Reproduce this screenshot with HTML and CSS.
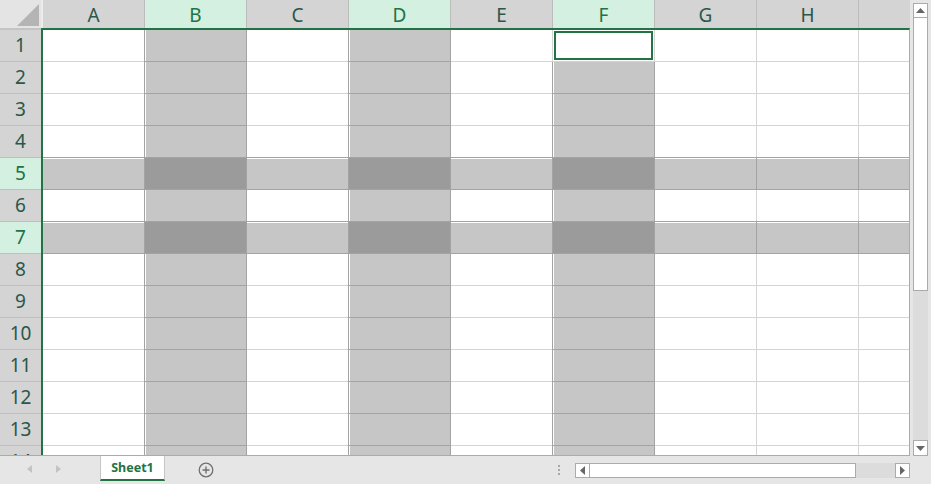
FILE: index.html
```html
<!DOCTYPE html>
<html lang="en">

<head>
    <meta charset="UTF-8">
    <title>Sheet1</title>
    <link rel="stylesheet" href="styles.css">
</head>

<body>
    <div class="app">
        <div class="main">
            <div class="sheet">
                <div class="head-row">
                    <div class="corner">
                        <svg width="24" height="24" viewBox="0 0 24 24"><polygon points="23,1 23,23 1,23" fill="#b4b4b4" /></svg>
                    </div>
                    <div class="col-head">A</div>
                    <div class="col-head on">B</div>
                    <div class="col-head">C</div>
                    <div class="col-head on">D</div>
                    <div class="col-head">E</div>
                    <div class="col-head on">F</div>
                    <div class="col-head">G</div>
                    <div class="col-head">H</div>
                    <div class="col-head"></div>
                </div>
                <div class="sheet-body">
                    <div class="row-heads">
                        <div class="row-head">1</div>
                        <div class="row-head">2</div>
                        <div class="row-head">3</div>
                        <div class="row-head">4</div>
                        <div class="row-head on">5</div>
                        <div class="row-head">6</div>
                        <div class="row-head on">7</div>
                        <div class="row-head">8</div>
                        <div class="row-head">9</div>
                        <div class="row-head">10</div>
                        <div class="row-head">11</div>
                        <div class="row-head">12</div>
                        <div class="row-head">13</div>
                        <div class="row-head">14</div>
                    </div>
                    <div class="cells" id="cells"></div>
                </div>
            </div>
            <div class="vscroll">
                <div class="sbtn">
                    <svg width="9" height="5" viewBox="0 0 9 5"><polygon points="4.5,0 9,5 0,5" fill="#666" /></svg>
                </div>
                <div class="vthumb"></div>
                <div class="vtrack"></div>
                <div class="sbtn">
                    <svg width="9" height="5" viewBox="0 0 9 5"><polygon points="0,0 9,0 4.5,5" fill="#666" /></svg>
                </div>
            </div>
        </div>

        <div class="tabbar">
            <div class="nav">
                <svg width="5" height="8" viewBox="0 0 5 8"><polygon points="5,0 5,8 0,4" fill="#c3c3c3" /></svg>
                <svg width="5" height="8" viewBox="0 0 5 8"><polygon points="0,0 5,4 0,8" fill="#c3c3c3" /></svg>
            </div>
            <div class="tab">Sheet1</div>
            <div class="add">
                <svg width="16" height="16" viewBox="0 0 16 16">
                    <circle cx="8" cy="8" r="6.8" fill="none" stroke="#707070" stroke-width="1.3" />
                    <path d="M8 4.5v7M4.5 8h7" stroke="#707070" stroke-width="1.4" />
                </svg>
            </div>
            <div class="grow"></div>
            <div class="dots"><span></span><span></span><span></span></div>
            <div class="hscroll">
                <div class="sbtn">
                    <svg width="5" height="9" viewBox="0 0 5 9"><polygon points="5,0 5,9 0,4.5" fill="#666" /></svg>
                </div>
                <div class="hthumb"></div>
                <div class="htrack"></div>
                <div class="sbtn">
                    <svg width="5" height="9" viewBox="0 0 5 9"><polygon points="0,0 5,4.5 0,9" fill="#666" /></svg>
                </div>
            </div>
        </div>
    </div>

    <script>
        const selCols = [1, 3, 5];
        const selRows = [5, 7];
        const grid = document.getElementById('cells');
        for (let r = 1; r <= 14; r++) {
            for (let c = 0; c < 9; c++) {
                const cell = document.createElement('div');
                const inCol = selCols.includes(c);
                const inRow = selRows.includes(r);
                cell.className = 'cell';
                if (r === 1 && c === 5) cell.classList.add('active');
                else if (inCol && inRow) cell.classList.add('both');
                else if (inCol) cell.classList.add('col');
                else if (inRow) cell.classList.add('row');
                grid.appendChild(cell);
            }
        }
    </script>
</body>

</html>
```

FILE: styles.css
```css
* {
    box-sizing: border-box;
}

body {
    margin: 0;
    width: 931px;
    height: 484px;
    overflow: hidden;
    background-color: #e6e6e6;
    font-family: 'Noto Sans', 'Open Sans', sans-serif;
}

.app {
    display: flex;
    flex-direction: column;
    width: 931px;
    height: 484px;
}

.main {
    display: flex;
    height: 456px;
}

.sheet {
    width: 910px;
    display: flex;
    flex-direction: column;
    overflow: hidden;
}

.head-row {
    display: flex;
    height: 28px;
    background-color: #d4d4d4;
    flex-shrink: 0;
}

.corner {
    width: 43px;
    flex-shrink: 0;
    background-color: #e4e4e4;
    border-right: 2px solid #ececec;
    display: flex;
    align-items: flex-end;
    justify-content: flex-end;
    padding: 0 1px 1px 0;
}

.col-head {
    width: 102px;
    flex-shrink: 0;
    border-right: 1px solid #bcbcbc;
    text-align: center;
    font-size: 19px;
    line-height: 30px;
    color: #2a5749;
}

.col-head.on,
.row-head.on {
    background-color: #d3f0e0;
    color: #217346;
}

.sheet-body {
    display: flex;
    height: 428px;
    border-bottom: 1px solid #ababab;
}

.row-heads {
    width: 41px;
    flex-shrink: 0;
    background-color: #d4d4d4;
    border-top: 2px solid #c4c4c4;
    overflow: hidden;
}

.row-head {
    height: 32px;
    border-bottom: 1px solid #bfbfbf;
    text-align: center;
    font-size: 19px;
    line-height: 31px;
    color: #2a5749;
}

.cells {
    flex: 1;
    display: grid;
    grid-template-columns: repeat(9, 102px);
    grid-auto-rows: 32px;
    border-top: 2px solid #217346;
    border-left: 2px solid #217346;
    border-right: 1px solid #ababab;
    overflow: hidden;
    background-color: #ffffff;
}

.cell {
    background-color: #ffffff;
    border-right: 1px solid #d4d4d4;
    border-bottom: 1px solid #d4d4d4;
}

.cell.col,
.cell.row {
    background-color: #c6c6c6;
    border-color: #a3a3a3;
}

.cell.col {
    box-shadow: -1px 0 0 #a3a3a3, inset 1px 0 0 #ffffff;
}

.cell.row {
    box-shadow: 0 -1px 0 #a3a3a3, inset 0 1px 0 #ffffff;
}

.cell.both {
    background-color: #9b9b9b;
    border-color: #a3a3a3;
    box-shadow: -1px 0 0 #a3a3a3, 0 -1px 0 #a3a3a3;
}

.cell.active {
    box-shadow: inset 0 0 0 1px #ffffff, inset 0 0 0 3px #217346;
}

/* scrollbars */
.vscroll {
    width: 21px;
    display: flex;
    flex-direction: column;
    padding: 3px 3px 0 3px;
}

.sbtn {
    width: 15px;
    height: 15px;
    flex-shrink: 0;
    background-color: #ffffff;
    border: 1px solid #ababab;
    display: flex;
    align-items: center;
    justify-content: center;
}

.vscroll .sbtn:last-child {
    height: 16px;
}

.vthumb {
    height: 273px;
    background-color: #ffffff;
    border: 1px solid #ababab;
    border-top: none;
}

.vtrack {
    flex: 1;
    background-color: #dcdcdc;
}

.tabbar {
    display: flex;
    height: 28px;
    align-items: flex-start;
}

.nav {
    width: 100px;
    display: flex;
    gap: 24px;
    padding: 9px 0 0 27px;
}

.tab {
    width: 65px;
    height: 25px;
    background-color: #ffffff;
    border-left: 1px solid #c6c6c6;
    border-right: 1px solid #c6c6c6;
    border-bottom: 2px solid #217346;
    color: #217346;
    font-weight: bold;
    font-size: 12.5px;
    line-height: 24px;
    text-align: center;
}

.add {
    margin: 5px 0 0 33px;
    height: 16px;
}

.grow {
    flex: 1;
}

.dots {
    display: flex;
    flex-direction: column;
    gap: 2px;
    margin: 9px 15px 0 0;
}

.dots span {
    width: 2px;
    height: 2px;
    background-color: #a8a8a8;
}

.hscroll {
    width: 335px;
    height: 15px;
    margin: 7px 21px 0 0;
    display: flex;
}

.hthumb {
    width: 266px;
    background-color: #ffffff;
    border: 1px solid #ababab;
    border-left: none;
}

.htrack {
    flex: 1;
    background-color: #dcdcdc;
}
```
